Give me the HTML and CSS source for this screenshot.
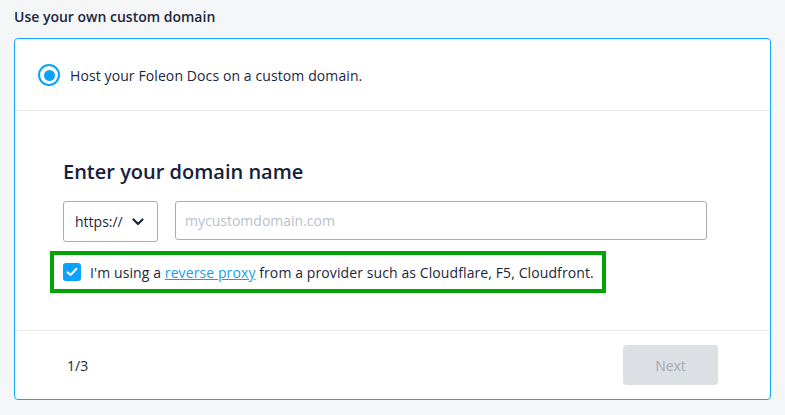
FILE: index.html
```html
<!doctype html>
<html lang="en">
<head>
    <meta charset="UTF-8">
    <title>Custom domain</title>
    <link rel="stylesheet" href="styles.css">
</head>
<body>
<div class="page">
    <div class="title">Use your own custom domain</div>
    <div class="card">
        <div class="option">
            <span class="radio"></span>
            <span>Host your Foleon Docs on a custom domain.</span>
        </div>
        <div class="body">
            <h2>Enter your domain name</h2>
            <div class="fields">
                <div class="select">
                    <span>https://</span>
                    <svg width="12" height="8" viewBox="0 0 12 8"><path d="M1.5 1.5 L6 6 L10.5 1.5" fill="none" stroke="#1b2640" stroke-width="2.2" stroke-linecap="round" stroke-linejoin="round"/></svg>
                </div>
                <div class="input">mycustomdomain.com</div>
            </div>
            <div class="proxy">
                <span class="check">
                    <svg width="12" height="10" viewBox="0 0 12 10"><path d="M1.5 5.2 L4.5 8 L10.5 1.8" fill="none" stroke="#fff" stroke-width="2" stroke-linecap="round" stroke-linejoin="round"/></svg>
                </span>
                <span>I'm using a <a href="#">reverse proxy</a> from a provider such as Cloudflare, F5, Cloudfront.</span>
            </div>
        </div>
        <div class="footer">
            <span class="step">1/3</span>
            <button class="next">Next</button>
        </div>
    </div>
</div>
</body>
</html>
```

FILE: styles.css
```css
*{
    margin: 0;
    padding: 0;
    box-sizing: border-box;
}
body{
    background-color: #f5f6f8;
    font-family: "Open Sans", "Liberation Sans", sans-serif;
    color: #1b2640;
}
.page{
    padding: 8px 14px 0 14px;
}
.title{
    font-size: 14px;
    font-weight: 600;
    line-height: 18px;
    height: 30px;
}
.card{
    width: 757px;
    height: 362px;
    background-color: #fff;
    border: 1px solid #12a8f5;
    border-radius: 4px;
    display: flex;
    flex-direction: column;
}
.option{
    height: 72px;
    display: flex;
    align-items: center;
    gap: 10px;
    padding-left: 23px;
    padding-top: 1px;
    font-size: 14px;
    letter-spacing: 0.1px;
    border-bottom: 1px solid #e6e8ec;
}
.radio{
    width: 22px;
    height: 22px;
    border-radius: 50%;
    border: 2.5px solid #0aa2fb;
    display: flex;
    align-items: center;
    justify-content: center;
}
.radio::after{
    content: "";
    width: 11px;
    height: 11px;
    border-radius: 50%;
    background-color: #0aa2fb;
}
.body{
    height: 220px;
    padding: 47px 0 0 48px;
    border-bottom: 1px solid #e6e8ec;
}
h2{
    font-size: 20px;
    font-weight: 600;
    line-height: 28px;
    color: #14213d;
}
.fields{
    display: flex;
    gap: 17px;
    margin-top: 15px;
}
.select{
    width: 95px;
    height: 41px;
    border: 1px solid #a4adbb;
    border-radius: 3px;
    display: flex;
    align-items: center;
    justify-content: space-between;
    padding: 0 13px 0 11px;
    font-size: 14px;
}
.input{
    width: 532px;
    height: 39px;
    border: 1px solid #a4adbb;
    border-radius: 3px;
    display: flex;
    align-items: center;
    padding-left: 9px;
    font-size: 14px;
    color: #b8bfca;
}
.proxy{
    width: 556px;
    height: 42px;
    margin: 9px 0 0 -13px;
    border: 4px solid #02a402;
    display: flex;
    align-items: center;
    gap: 9px;
    padding-left: 9px;
    font-size: 14px;
    letter-spacing: 0.1px;
}
.check{
    width: 18px;
    height: 18px;
    border-radius: 3px;
    background-color: #0aa2fb;
    display: flex;
    align-items: center;
    justify-content: center;
}
.proxy a{
    color: #17a0e6;
}
.footer{
    flex: 1;
    display: flex;
    align-items: center;
    justify-content: space-between;
    padding: 0 52px 0 52px;
}
.step{
    font-size: 14px;
}
.next{
    width: 95px;
    height: 40px;
    border: none;
    border-radius: 4px;
    background-color: #dcdfe4;
    color: #a3a9b4;
    font-family: inherit;
    font-size: 14px;
}
```
